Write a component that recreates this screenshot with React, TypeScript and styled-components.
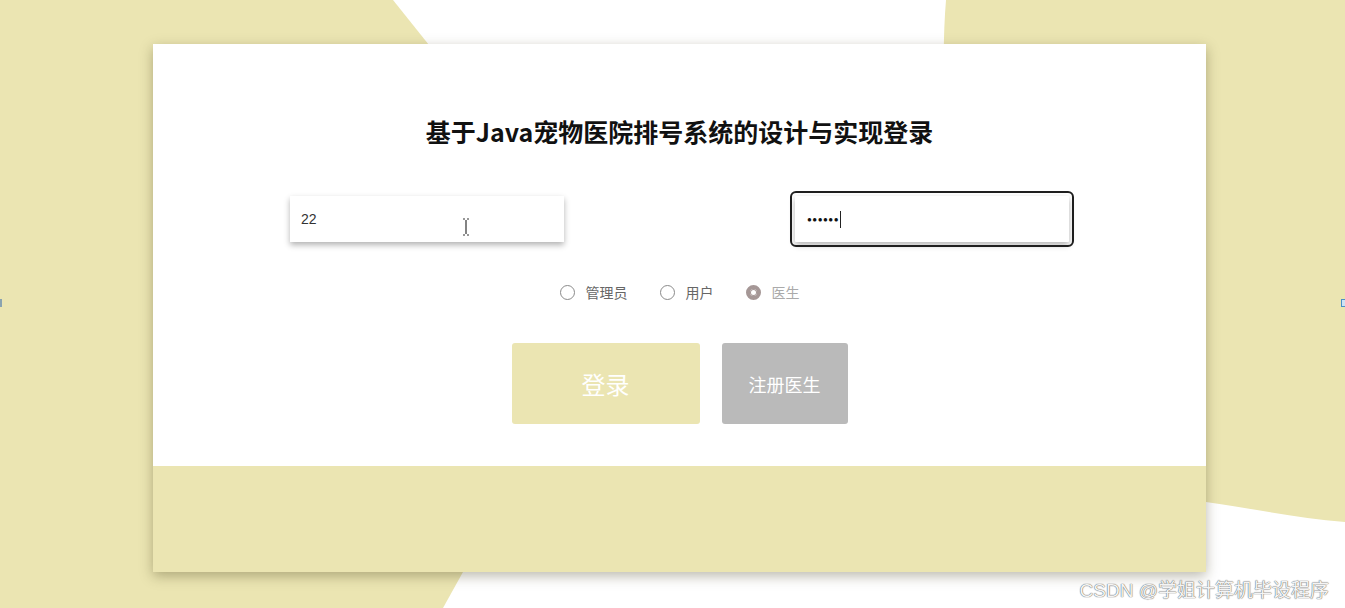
import React from "react";
import styled, { createGlobalStyle } from "styled-components";

const palette = {
  yellow: "#ebe5b2",
  gray: "#bababa",
  text: "#333333",
  radio: "#a59796",
};

const GlobalStyle = createGlobalStyle`
  html, body {
    margin: 0;
    padding: 0;
    background: #ffffff;
    font-family: "Noto Sans CJK SC", "Noto Sans", "Liberation Sans", sans-serif;
  }
  * {
    box-sizing: border-box;
  }
`;

const Page = styled.div`
  position: relative;
  width: 100%;
  height: 608px;
  overflow: hidden;
  background: #ffffff;
  display: flex;
  align-items: flex-start;
  padding: 44px 0 0 153px;
`;

const Backdrop = styled.svg`
  position: absolute;
  inset: 0;
  width: 1345px;
  height: 608px;
  z-index: 0;
`;

const Card = styled.div`
  position: relative;
  z-index: 1;
  width: 1053px;
  display: flex;
  flex-direction: column;
  box-shadow: 0 4px 12px rgba(60, 55, 20, 0.35);
`;

const CardBody = styled.div`
  height: 422px;
  background: #ffffff;
  display: flex;
  flex-direction: column;
  align-items: center;
  padding-top: 70px;
`;

const CardFooter = styled.div`
  height: 106px;
  background: ${palette.yellow};
`;

const Title = styled.h1`
  margin: 0;
  font-size: 25px;
  line-height: 34px;
  font-weight: 700;
  color: #111111;
`;

const InputRow = styled.div`
  margin-top: 48px;
  width: 100%;
  display: flex;
  justify-content: space-between;
  padding: 0 137px;
`;

const Field = styled.div<{ $focused?: boolean }>`
  position: relative;
  width: 274px;
  height: 46px;
  background: #ffffff;
  box-shadow: 0 3px 6px rgba(0, 0, 0, 0.3);
  display: flex;
  align-items: center;
  padding-left: 11px;
  font-size: 14px;
  color: ${palette.text};
  font-family: "Liberation Sans", "Noto Sans", sans-serif;
  outline: ${(p) => (p.$focused ? "2px solid #1e1e1e" : "none")};
  outline-offset: 3px;
  border-radius: ${(p) => (p.$focused ? "1px" : "0")};
`;

const Dots = styled.span`
  font-size: 8px;
  letter-spacing: 0.5px;
  color: #111;
  padding-left: 1px;
`;

const Caret = styled.span`
  display: inline-block;
  width: 1px;
  height: 17px;
  background: #222;
  margin-left: 1px;
`;

const Cursor = styled.svg`
  position: absolute;
  left: 172px;
  top: 22px;
`;

const RadioRow = styled.div`
  margin-top: 40px;
  display: flex;
  align-items: center;
  gap: 32px;
`;

const RadioItem = styled.label<{ $checked?: boolean }>`
  display: flex;
  align-items: center;
  gap: 11px;
  font-size: 14px;
  line-height: 20px;
  color: ${(p) => (p.$checked ? "#aaaaaa" : "#666666")};
`;

const RadioDot = styled.span<{ $checked?: boolean }>`
  width: 15px;
  height: 15px;
  border-radius: 50%;
  border: ${(p) => (p.$checked ? `4px solid ${palette.radio}` : "1.6px solid #8a8a8a")};
  background: ${(p) => (p.$checked ? "#ffffff" : "transparent")};
  box-shadow: ${(p) => (p.$checked ? `inset 0 0 0 1px ${palette.radio}` : "none")};
`;

const ButtonRow = styled.div`
  margin-top: 41px;
  display: flex;
  gap: 22px;
`;

const Button = styled.button<{ $variant: "primary" | "secondary" }>`
  height: 81px;
  width: ${(p) => (p.$variant === "primary" ? "188px" : "126px")};
  border: none;
  border-radius: 3px;
  background: ${(p) => (p.$variant === "primary" ? palette.yellow : palette.gray)};
  color: #ffffff;
  font-family: inherit;
  font-size: ${(p) => (p.$variant === "primary" ? "24px" : "18px")};
  cursor: pointer;
`;

const Watermark = styled.div`
  position: absolute;
  right: 16px;
  bottom: 6px;
  z-index: 2;
  font-size: 19px;
  color: #f4f4f4;
  text-shadow: 0 0 1px #555, 0 0 1px #777;
  font-family: "Liberation Sans", "Noto Sans CJK SC", sans-serif;
`;

const EdgeMark = styled.span<{ $side: "left" | "right" }>`
  position: absolute;
  top: 299px;
  ${(p) => (p.$side === "left" ? "left: 0; width: 2px;" : "right: 0; width: 4px; border: 1px solid #4a90c8; border-right: none;")}
  height: 8px;
  background-color: ${(p) => (p.$side === "left" ? "#8aa3b0" : "#cfe3f3")};
  z-index: 2;
`;

const roles = [
  { label: "管理员", checked: false },
  { label: "用户", checked: false },
  { label: "医生", checked: true },
];

export default function App() {
  return (
    <>
      <GlobalStyle />
      <Page>
        <Backdrop viewBox="0 0 1345 608">
          <path d="M0 0 L393 0 L621 285 L463 572 L443 608 L0 608 Z" fill={palette.yellow} />
          <path
            d="M946 0 C922 300 1100 490 1206 502 C1262 510 1300 519 1345 522 L1345 0 Z"
            fill={palette.yellow}
          />
        </Backdrop>
        <Card>
          <CardBody>
            <Title>基于Java宠物医院排号系统的设计与实现登录</Title>
            <InputRow>
              <Field>
                22
                <Cursor width="8" height="18" viewBox="0 0 8 18">
                  <path d="M1 1 H3 M5 1 H7 M4 2 V16 M1 17 H3 M5 17 H7" stroke="#333" strokeWidth="1.2" fill="none" />
                </Cursor>
              </Field>
              <Field $focused>
                <Dots>●●●●●●</Dots>
                <Caret />
              </Field>
            </InputRow>
            <RadioRow>
              {roles.map((r) => (
                <RadioItem key={r.label} $checked={r.checked}>
                  <RadioDot $checked={r.checked} />
                  {r.label}
                </RadioItem>
              ))}
            </RadioRow>
            <ButtonRow>
              <Button $variant="primary">登录</Button>
              <Button $variant="secondary">注册医生</Button>
            </ButtonRow>
          </CardBody>
          <CardFooter />
        </Card>
        <EdgeMark $side="left" />
        <EdgeMark $side="right" />
        <Watermark>CSDN @学姐计算机毕设程序</Watermark>
      </Page>
    </>
  );
}
